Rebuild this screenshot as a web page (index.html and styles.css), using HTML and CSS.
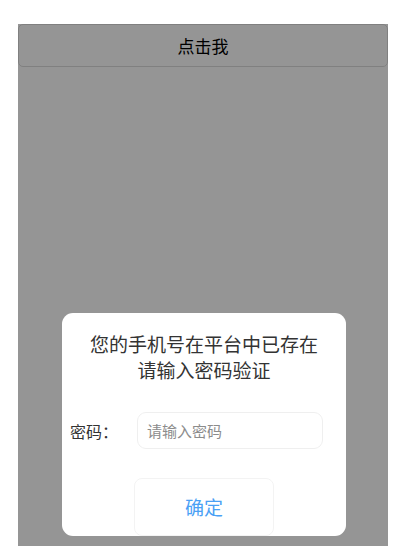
FILE: index.html
```html
<!DOCTYPE html>
<html lang="zh-CN">
<head>
<meta charset="utf-8">
<title>点击我</title>
<link rel="stylesheet" href="styles.css">
</head>
<body>
<div class="phone">
  <button class="top-btn" type="button">点击我</button>
  <div class="mask"></div>
  <div class="dialog">
    <div class="title">您的手机号在平台中已存在<br>请输入密码验证</div>
    <div class="form-row">
      <label class="label" for="pwd">密码：</label>
      <input class="input" id="pwd" type="password" placeholder="请输入密码">
    </div>
    <button class="confirm" type="button">确定</button>
  </div>
</div>
</body>
</html>
```

FILE: styles.css
```css
html, body {
  margin: 0;
  padding: 0;
  background: #ffffff;
  overflow: hidden;
  font-family: "Noto Sans CJK SC", "Noto Sans", sans-serif;
}

.phone {
  position: relative;
  margin: 24px 0 0 18px;
  width: 370px;
  height: 522px;
  overflow: hidden;
  background: #ffffff;
}

.top-btn {
  display: block;
  width: 100%;
  height: 43px;
  margin: 0;
  padding: 0;
  border: 1px solid #dcdcdc;
  border-radius: 5px;
  background: #ffffff;
  color: #000000;
  font-family: inherit;
  font-size: 17px;
  line-height: 41px;
}

.mask {
  position: absolute;
  inset: 0;
  background: rgba(0, 0, 0, 0.415);
}

.dialog {
  position: absolute;
  left: 44px;
  top: 289px;
  width: 284px;
  height: 223px;
  background: #ffffff;
  border-radius: 11px;
  overflow: hidden;
  display: flex;
  flex-direction: column;
  align-items: center;
}

.title {
  padding-top: 18px;
  font-size: 19px;
  line-height: 26px;
  color: #333333;
  text-align: center;
}

.form-row {
  align-self: stretch;
  display: flex;
  align-items: center;
  margin-top: 29px;
  padding-left: 8px;
}

.label {
  width: 67px;
  font-size: 16px;
  color: #333333;
}

.input {
  box-sizing: border-box;
  width: 186px;
  height: 37px;
  margin: 0;
  padding: 0 9px;
  border: 1px solid #efefef;
  border-radius: 9px;
  background: #ffffff;
  font-family: inherit;
  font-size: 15px;
  color: #333333;
  outline: none;
}

.input::placeholder {
  color: #8c8c8c;
}

.confirm {
  box-sizing: border-box;
  width: 140px;
  height: 58px;
  margin: 29px 0 0 0;
  padding: 0;
  border: 1px solid #f3f3f3;
  border-radius: 8px;
  background: #ffffff;
  color: #4aa0f5;
  font-family: inherit;
  font-size: 19px;
  line-height: 56px;
  flex-shrink: 0;
}
```
